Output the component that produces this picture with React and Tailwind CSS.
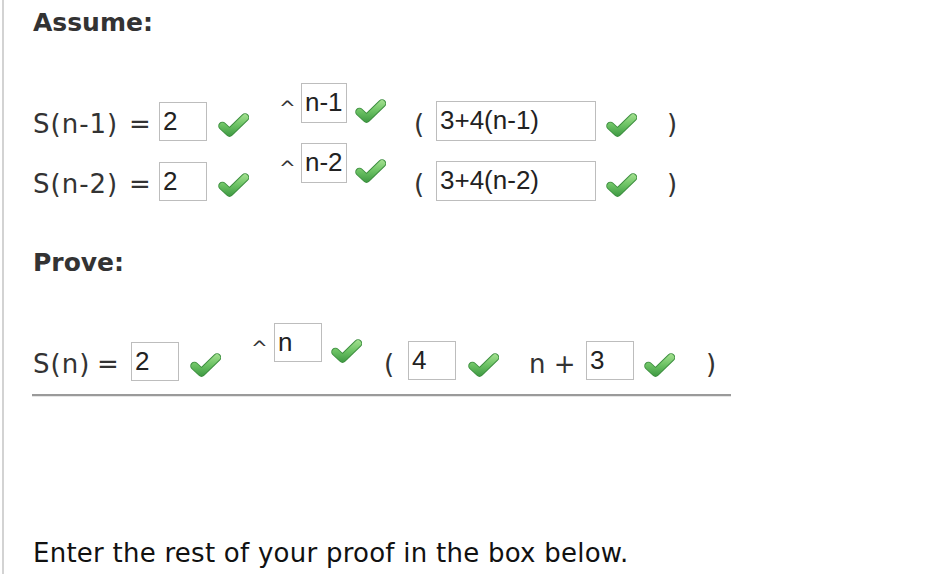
const label = "font-['DejaVu_Sans','Verdana',sans-serif] text-[26px] text-[#333]";
const boxText = "font-['Liberation_Sans','Arial',sans-serif] text-[26px] text-[#222]";

function Check({ className = "" }) {
  return (
    <svg width="31" height="25" viewBox="0 0 31 25" className={`shrink-0 ${className}`}>
      <defs>
        <linearGradient id="chk" x1="0" y1="2" x2="0" y2="24" gradientUnits="userSpaceOnUse">
          <stop offset="0" stopColor="#a3e08f" />
          <stop offset="0.5" stopColor="#6cc264" />
          <stop offset="1" stopColor="#3f9a43" />
        </linearGradient>
      </defs>
      <polyline points="4.5,14 11.5,20.5 27,5.5" fill="none" stroke="#3e8f40" strokeWidth="8.5" strokeLinecap="round" strokeLinejoin="round" />
      <polyline points="4.5,14 11.5,20.5 27,5.5" fill="none" stroke="url(#chk)" strokeWidth="6.5" strokeLinecap="round" strokeLinejoin="round" />
    </svg>
  );
}

function Box({ value, w = "w-[48px]", h = "h-[39px]", className = "" }) {
  return (
    <div className={`${w} ${h} shrink-0 border border-[#bdbdbd] bg-white pl-[3px] leading-[37px] ${boxText} ${className}`}>
      {value}
    </div>
  );
}

function Caret({ className = "" }) {
  return (
    <span className={`shrink-0 text-[20px] leading-[20px] text-[#333] font-['DejaVu_Sans',sans-serif] mt-[15px] ${className}`}>^</span>
  );
}

function AssumeRow({ n, expr }) {
  return (
    <div className="flex items-start h-[60px]">
      <span className={`${label} tracking-[1px] w-[96px] leading-[39px] mt-[22px] shrink-0`}>S({n})</span>
      <span className={`${label} w-[30px] leading-[39px] mt-[22px] shrink-0`}>=</span>
      <Box value="2" className="mt-[19px]" />
      <Check className="ml-[11px] mt-[29px]" />
      <Caret className="ml-[30px] w-[22px]" />
      <Box value={n} w="w-[46px]" h="h-[40px]" />
      <Check className="ml-[8px] mt-[15px]" />
      <span className={`${label} ml-[28px] w-[22px] leading-[39px] mt-[22px] shrink-0`}>(</span>
      <Box value={expr} w="w-[160px]" h="h-[40px]" className="mt-[18px]" />
      <Check className="ml-[10px] mt-[29px]" />
      <span className={`${label} ml-[30px] leading-[39px] mt-[22px]`}>)</span>
    </div>
  );
}

export default function App() {
  return (
    <div className="w-[930px] h-[574px] bg-white overflow-hidden">
      <div className="ml-[2px] h-full border-l-2 border-[#d3d3d3] pl-[29px] pt-[8px]">
        <h2 className="font-['DejaVu_Sans','Verdana',sans-serif] font-bold text-[25px] leading-[30px] text-[#333]">Assume:</h2>

        <div className="mt-[45px]">
          <AssumeRow n="n-1" expr="3+4(n-1)" />
          <AssumeRow n="n-2" expr="3+4(n-2)" />
        </div>

        <h2 className="mt-[45px] font-['DejaVu_Sans','Verdana',sans-serif] font-bold text-[25px] leading-[30px] text-[#333]">Prove:</h2>

        <div className="mt-[45px] flex items-start h-[60px]">
          <span className={`${label} tracking-[1px] w-[64px] leading-[39px] mt-[22px] shrink-0`}>S(n)</span>
          <span className={`${label} w-[34px] leading-[39px] mt-[22px] shrink-0`}>=</span>
          <Box value="2" className="mt-[19px]" />
          <Check className="ml-[11px] mt-[29px]" />
          <Caret className="ml-[30px] w-[23px]" />
          <Box value="n" />
          <Check className="ml-[9px] mt-[15px]" />
          <span className={`${label} ml-[22px] w-[24px] leading-[39px] mt-[22px] shrink-0`}>(</span>
          <Box value="4" className="mt-[18px]" />
          <Check className="ml-[12px] mt-[29px]" />
          <span className={`${label} ml-[30px] w-[57px] leading-[39px] mt-[22px] shrink-0`}>n +</span>
          <Box value="3" className="mt-[18px]" />
          <Check className="ml-[10px] mt-[29px]" />
          <span className={`${label} ml-[31px] leading-[39px] mt-[22px]`}>)</span>
        </div>

        <div className="mt-[11px] -ml-[1px] w-[699px] h-[3px] border-t-2 border-b border-t-[#9a9a9a] border-b-[#e6e6e6]" />

        <p className="mt-[141px] font-['DejaVu_Sans','Verdana',sans-serif] text-[26px] tracking-[0.25px] leading-[30px] text-[#111]">
          Enter the rest of your proof in the box below.
        </p>
      </div>
    </div>
  );
}
